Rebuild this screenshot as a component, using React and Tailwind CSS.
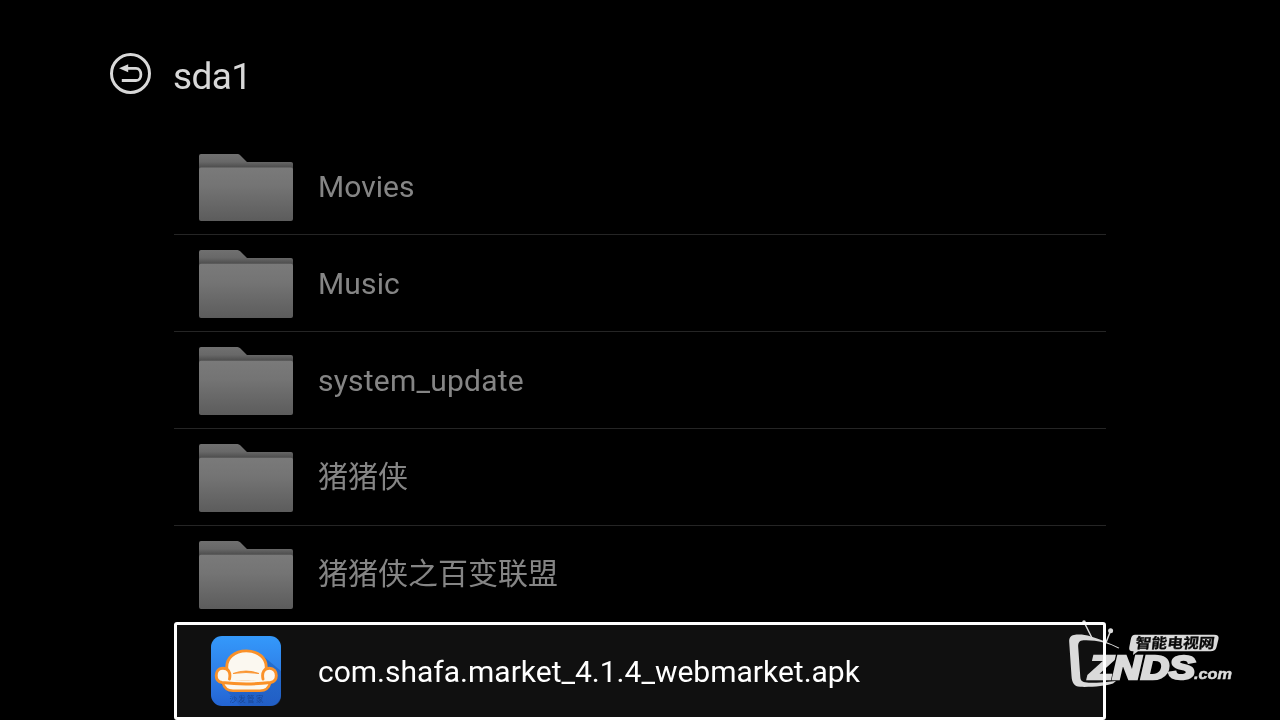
import React from 'react';

const folders = [
  { name: 'Movies', text: 'tracking-[0.05px]', icon: 'mt-px h-[67px]' },
  { name: 'Music', text: 'tracking-[0.15px]', icon: 'h-[68px]' },
  { name: 'system_update', text: 'tracking-[0.22px]', icon: 'h-[68px]' },
  { name: '猪猪侠', text: '-mt-[3px]', icon: 'h-[68px]' },
  { name: '猪猪侠之百变联盟', text: '-mt-[3px]', icon: 'h-[68px]' },
];

function BackIcon() {
  return (
    <svg className="h-[42px] w-[42px] shrink-0" viewBox="0 0 42 42" fill="none">
      <circle cx="20.5" cy="20.5" r="19" stroke="#d8d8d8" strokeWidth="3" />
      <path d="M17 15.3H26C32.5 15.3 32.5 27.5 26 27.5H11.8" stroke="#d8d8d8" strokeWidth="2.8" />
      <path d="M9 15.2L18.2 11.2V19.2Z" fill="#d8d8d8" />
    </svg>
  );
}

function FolderIcon({ className }) {
  return (
    <svg className={`w-[94px] shrink-0 ${className}`} viewBox="0 0 94 68" preserveAspectRatio="none">
      <defs>
        <linearGradient id="folderBack" x1="0" y1="0" x2="0" y2="13" gradientUnits="userSpaceOnUse">
          <stop offset="0" stopColor="#707070" />
          <stop offset="0.6" stopColor="#686868" />
          <stop offset="1" stopColor="#505050" />
        </linearGradient>
        <linearGradient id="folderFront" x1="0" y1="13" x2="0" y2="68" gradientUnits="userSpaceOnUse">
          <stop offset="0" stopColor="#7a7a7a" />
          <stop offset="0.35" stopColor="#747474" />
          <stop offset="1" stopColor="#5c5c5c" />
        </linearGradient>
      </defs>
      <path d="M0 17V2Q0 0 2 0H38.5Q40 0 41.5 1.5L48 8H92Q94 8 94 10V17Z" fill="url(#folderBack)" />
      <rect y="13.7" width="94" height="54.3" rx="2" fill="url(#folderFront)" />
    </svg>
  );
}

function SofaIcon() {
  return (
    <svg className="h-[70px] w-[70px] shrink-0" viewBox="0 0 70 70">
      <defs>
        <linearGradient id="appBlue" x1="0" y1="0" x2="0" y2="1">
          <stop offset="0" stopColor="#3499fb" />
          <stop offset="0.5" stopColor="#2f80e8" />
          <stop offset="1" stopColor="#2364d3" />
        </linearGradient>
        <linearGradient id="appShadow" x1="0" y1="0" x2="0" y2="1">
          <stop offset="0" stopColor="#1955ad" />
          <stop offset="1" stopColor="#2058b8" />
        </linearGradient>
      </defs>
      <rect width="70" height="70" rx="11" fill="url(#appBlue)" />
      <path d="M52 20L70 35V59Q70 70 59 70H29L9 47Z" fill="url(#appShadow)" opacity=".5" />
      <path d="M11.5 46C13 52 16 54.8 22 54.8H49C55 54.8 58 52 59.5 46Z" fill="#fbf8f0" stroke="#fa9128" strokeWidth="2.6" />
      <path d="M16 34C14 22 24 14.9 35.3 14.9S57 22 55 34L52 46H18Z" fill="#fbf8f0" stroke="#fa9128" strokeWidth="2.9" />
      <path d="M22 37.5Q35 32.5 48 37.5Q35 35.5 22 37.5Z" fill="#fa9128" stroke="#fa9128" strokeWidth="0.8" />
      <path d="M19 43C20 36 17 32.2 12 32.2C7 32.2 5 36 5 39.5C5 44 8 46 11 46.5C25 48.2 45 48.2 59 46.5C62 46 65 44 65 39.5C65 36 63 32.2 58 32.2C53 32.2 50 36 51 43C45 45 25 45 19 43Z" fill="#fbf8f0" />
      <path d="M18.5 43C20 36 17 32.2 12 32.2C7 32.2 5.2 36 5.2 39.5C5.2 44 8 46 11 46.5C25 48.2 45 48.2 59.5 46.5C62.5 46 65.3 44 65.3 39.5C65.3 36 63 32.2 58.5 32.2C53.5 32.2 50.5 36 52 43" fill="none" stroke="#fa9128" strokeWidth="2.9" strokeLinecap="round" />
      <text x="18.5" y="66" fontSize="7.5" letterSpacing="1.3" fontFamily="Noto Sans CJK SC, sans-serif" fill="#173f86" opacity=".8">沙发管家</text>
    </svg>
  );
}

function Watermark() {
  return (
    <svg className="absolute left-[1064px] top-[616px] h-[80px] w-[176px] mix-blend-lighten" viewBox="0 0 176 80">
      <g fill="#dadada">
        <circle cx="20" cy="6" r="1.8" />
        <circle cx="46.6" cy="14.8" r="2.5" />
        <path d="M20 6L28.5 23M46.5 15L42 26.5" fill="none" stroke="#dadada" strokeWidth="1.5" />
        <path d="M55.3 31.8C47 27.5 37 23.5 27 20.5C20 18.5 15 18 10 19C6.5 19.8 5 22 5.2 26L7.5 60C8 67 10 70.3 16 70.8C27 71.2 42 70 49 67.5L52 65L44 65.8C36 66.8 27 67.3 21 66.3C17.5 65.5 16.5 64 16.3 61L14.2 31C14 26.5 15.5 24.5 19.5 24.3C32 23.8 45 27 54.5 32.5Z" />
        <path d="M71 18.7H150Q155.5 18.7 154.5 23L152.5 31Q151.5 35.3 146.5 35.3H74L69 39L69.5 35.3H68.5Q64.5 35.3 65.3 31L67 22.5Q67.7 18.7 71 18.7Z" />
      </g>
      <text x="75" y="32" fontSize="14" fontWeight="700" textLength="79" lengthAdjust="spacingAndGlyphs" transform="skewX(-7)" fontFamily="Noto Sans CJK SC, sans-serif" fill="#080808" stroke="#080808" strokeWidth="0.3">智能电视网</text>
      <g fill="#dadada" fontFamily="Liberation Sans, sans-serif" fontWeight="700" fontStyle="italic">
        <text x="25" y="62.7" fontSize="33" textLength="106" lengthAdjust="spacingAndGlyphs" stroke="#dadada" strokeWidth="2.7">ZNDS</text>
        <text x="130" y="63" fontSize="15" textLength="38" lengthAdjust="spacingAndGlyphs" stroke="#dadada" strokeWidth="0.5">.com</text>
      </g>
    </svg>
  );
}

export default function App() {
  return (
    <div className="relative h-[720px] w-[1280px] overflow-hidden bg-black font-['Roboto','Noto_Sans_CJK_SC',sans-serif]">
      <header className="flex h-[138px] items-start pl-[110px] pt-[53px]">
        <BackIcon />
        <h1 className="ml-[21px] text-[37px] leading-[48px] tracking-[-0.6px] text-[#d8d8d8]">sda1</h1>
      </header>
      <ul className="mx-[174px]">
        {folders.map((folder, i) => (
          <li
            key={folder.name}
            className={`flex h-[97px] items-center pl-[25px] pt-0.5 ${i < folders.length - 1 ? 'border-b border-[#252525]' : 'pb-px'}`}
          >
            <FolderIcon className={folder.icon} />
            <span className={`ml-[25px] text-[30px] leading-[40px] text-[#858585] ${folder.text}`}>{folder.name}</span>
          </li>
        ))}
        <li className="-mt-px flex h-[98px] items-center rounded-[3px] border-[3px] border-white bg-[#101010] pl-[34px]">
          <SofaIcon />
          <span className="ml-[37px] pt-0.5 text-[30px] leading-[40px] text-white">com.shafa.market_4.1.4_webmarket.apk</span>
        </li>
      </ul>
      <Watermark />
    </div>
  );
}
